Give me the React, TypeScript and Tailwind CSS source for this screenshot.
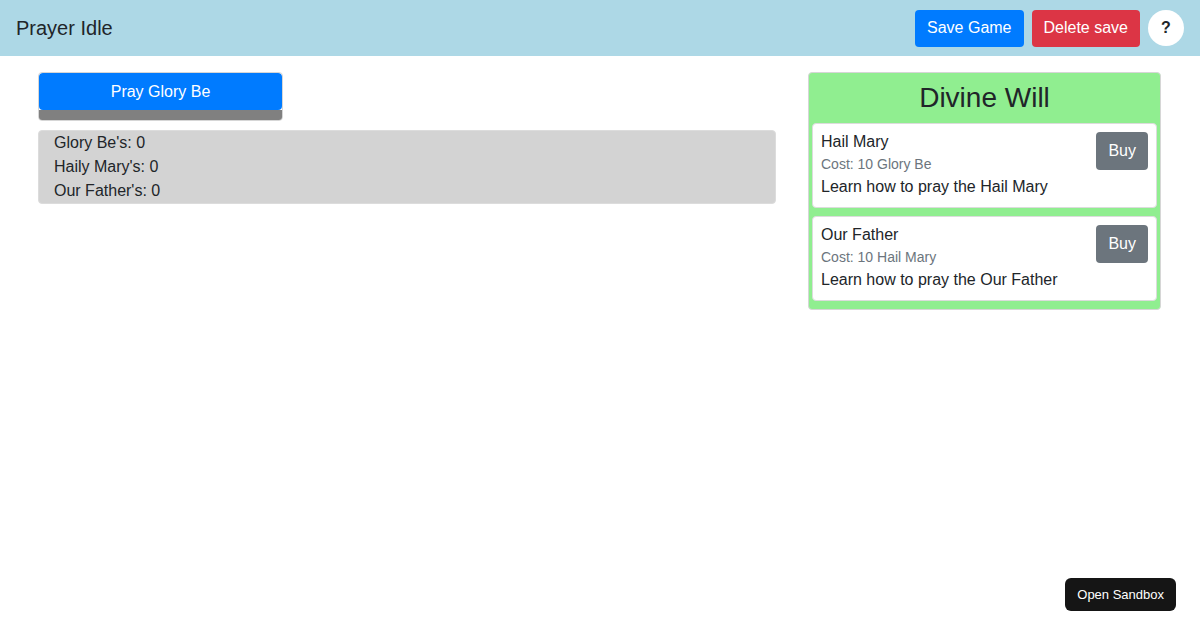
export default function App() {
  const upgrades = [
    { name: "Hail Mary", cost: "Cost: 10 Glory Be", desc: "Learn how to pray the Hail Mary" },
    { name: "Our Father", cost: "Cost: 10 Hail Mary", desc: "Learn how to pray the Our Father" },
  ];

  return (
    <div className="relative min-h-[630px] bg-white text-[#212529] font-['Liberation_Sans',Arial,sans-serif]">
      <header className="flex h-[56px] items-center justify-between bg-[#add8e6] pl-4 pr-4">
        <h1 className="text-[20px] leading-[30px]">Prayer Idle</h1>
        <div className="flex items-center gap-2">
          <button className="h-[37px] rounded bg-[#007bff] px-3 text-[16px] text-white">Save Game</button>
          <button className="h-[37px] rounded bg-[#dc3545] px-3 text-[16px] text-white">Delete save</button>
          <button className="flex h-[36px] w-[36px] items-center justify-center rounded-full bg-white text-[16px] font-bold">
            ?
          </button>
        </div>
      </header>

      <main className="flex gap-[32px] pl-[38px] pt-4">
        <div className="w-[738px]">
          <div className="w-[245px] overflow-hidden rounded border border-[#d6d6d6]">
            <button className="block h-[37px] w-full rounded bg-[#007bff] text-[16px] text-white">Pray Glory Be</button>
            <div className="h-[10px] bg-[#808080]" />
          </div>
          <div className="mt-[9px] rounded border border-[#dcdcdc] bg-[#d3d3d3] pl-[15px] text-[16px] leading-6">
            <p>Glory Be's: 0</p>
            <p>Haily Mary's: 0</p>
            <p>Our Father's: 0</p>
          </div>
        </div>

        <div className="w-[353px] rounded border border-[#d6d6d6] bg-[#90ee90] px-[3px] pt-2">
          <h2 className="mb-2 text-center text-[28px] leading-[33.6px]">Divine Will</h2>
          {upgrades.map((u) => (
            <div key={u.name} className="mb-[8px] flex justify-between rounded border border-[#dcdcdc] bg-white pb-2 pl-2 pr-2 pt-[6px]">
              <div>
                <div className="text-[16px] leading-6">{u.name}</div>
                <div className="text-[14px] leading-[21px] text-[#6c757d]">{u.cost}</div>
                <div className="text-[16px] leading-6">{u.desc}</div>
              </div>
              <button className="mt-[2px] h-[38px] rounded bg-[#6c757d] px-3 text-[16px] text-white">Buy</button>
            </div>
          ))}
        </div>
      </main>

      <button className="absolute bottom-[19px] right-[24px] h-[33px] rounded-md bg-[#151515] px-3 text-[13px] text-white">
        Open Sandbox
      </button>
    </div>
  );
}
